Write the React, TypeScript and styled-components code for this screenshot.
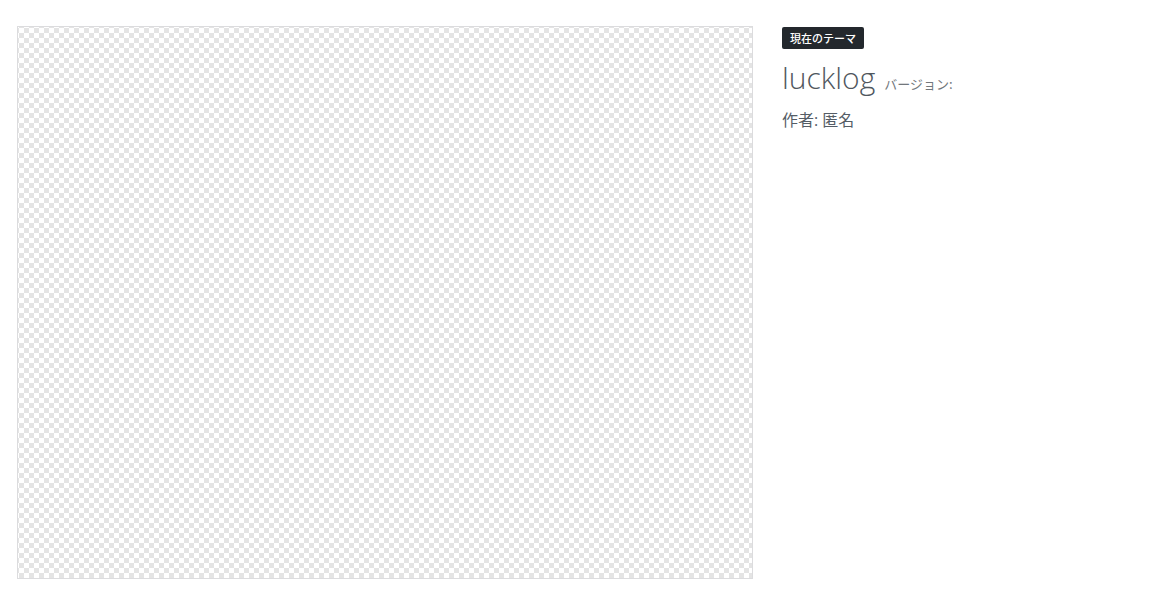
import styled, { createGlobalStyle } from 'styled-components';

const GlobalStyle = createGlobalStyle`
  html, body {
    margin: 0;
    padding: 0;
    background: #fff;
  }
  body {
    font-family: "Open Sans", "Noto Sans CJK JP", sans-serif;
    color: #32373c;
  }
`;

const Page = styled.div`
  display: flex;
  align-items: flex-start;
  gap: 29px;
  padding: 26px 17px 0;
`;

const Screenshot = styled.div`
  width: 734px;
  height: 551px;
  border: 1px solid #dcdcde;
  flex-shrink: 0;
  background-color: #fff;
  background-image:
    linear-gradient(45deg, #e4e4e4 25%, transparent 25%, transparent 75%, #e4e4e4 75%),
    linear-gradient(45deg, #e4e4e4 25%, transparent 25%, transparent 75%, #e4e4e4 75%);
  background-size: 10px 10px;
  background-position: 1px 1px, 6px 6px;
`;

const Details = styled.div`
  display: flex;
  flex-direction: column;
  align-items: flex-start;
  padding-top: 1px;
`;

const Badge = styled.span`
  display: inline-block;
  background: #23282d;
  color: #fff;
  font-size: 11px;
  font-weight: 500;
  line-height: 22px;
  padding: 0 8px;
  border-radius: 2px;
  font-family: "Noto Sans CJK JP", sans-serif;
`;

const Title = styled.h2`
  margin: 9px 0 0;
  font-size: 30px;
  font-weight: 300;
  line-height: 40px;
  color: #50575e;
  display: flex;
  align-items: baseline;
  gap: 9px;
`;

const Version = styled.span`
  font-size: 13px;
  font-weight: 400;
  color: #72777c;
  font-family: "Noto Sans CJK JP", sans-serif;
`;

const Author = styled.p`
  margin: 3px 0 0;
  font-size: 16px;
  color: #555d66;
  font-family: "Open Sans", "Noto Sans CJK JP", sans-serif;
`;

export default function App() {
  return (
    <>
      <GlobalStyle />
      <Page>
        <Screenshot />
        <Details>
          <Badge>現在のテーマ</Badge>
          <Title>
            lucklog <Version>バージョン:</Version>
          </Title>
          <Author>作者: 匿名</Author>
        </Details>
      </Page>
    </>
  );
}
